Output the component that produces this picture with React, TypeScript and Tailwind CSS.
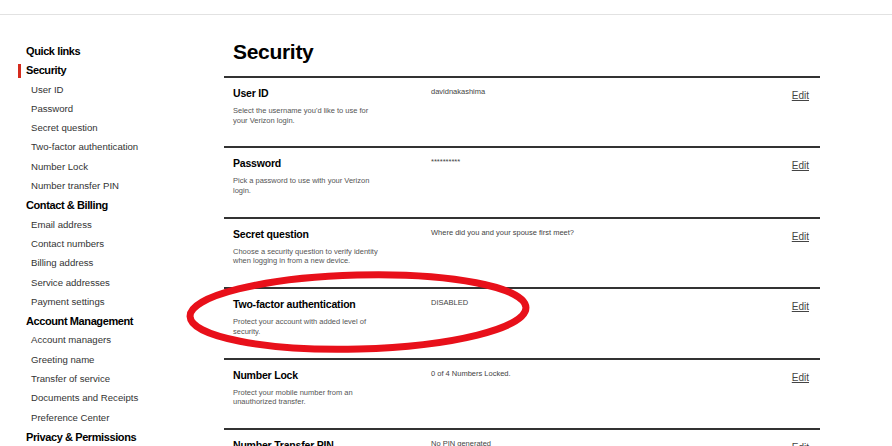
import React from 'react';

type NavEntry = { label: string; kind: 'head' | 'item' | 'active' };

const nav: NavEntry[] = [
  { label: 'Quick links', kind: 'head' },
  { label: 'Security', kind: 'active' },
  { label: 'User ID', kind: 'item' },
  { label: 'Password', kind: 'item' },
  { label: 'Secret question', kind: 'item' },
  { label: 'Two-factor authentication', kind: 'item' },
  { label: 'Number Lock', kind: 'item' },
  { label: 'Number transfer PIN', kind: 'item' },
  { label: 'Contact & Billing', kind: 'head' },
  { label: 'Email address', kind: 'item' },
  { label: 'Contact numbers', kind: 'item' },
  { label: 'Billing address', kind: 'item' },
  { label: 'Service addresses', kind: 'item' },
  { label: 'Payment settings', kind: 'item' },
  { label: 'Account Management', kind: 'head' },
  { label: 'Account managers', kind: 'item' },
  { label: 'Greeting name', kind: 'item' },
  { label: 'Transfer of service', kind: 'item' },
  { label: 'Documents and Receipts', kind: 'item' },
  { label: 'Preference Center', kind: 'item' },
  { label: 'Privacy & Permissions', kind: 'head' },
];

const rows = [
  { title: 'User ID', desc: "Select the username you'd like to use for your Verizon login.", value: 'davidnakashima' },
  { title: 'Password', desc: 'Pick a password to use with your Verizon login.', value: '**********' },
  { title: 'Secret question', desc: 'Choose a security question to verify identity when logging in from a new device.', value: 'Where did you and your spouse first meet?' },
  { title: 'Two-factor authentication', desc: 'Protect your account with added level of security.', value: 'DISABLED' },
  { title: 'Number Lock', desc: 'Protect your mobile number from an unauthorized transfer.', value: '0 of 4 Numbers Locked.' },
  { title: 'Number Transfer PIN', desc: 'Protect your number with a transfer PIN.', value: 'No PIN generated' },
];

export default function App() {
  return (
    <div
      className="relative h-[446px] w-[892px] overflow-hidden bg-white text-black"
      style={{ fontFamily: '"Liberation Sans", Arial, sans-serif' }}
    >
      {/* Top header strip */}
      <div className="h-[15px] border-b border-[#e2e2e2]" />

      <div className="flex">
        {/* Sidebar */}
        <nav className="w-[224px] shrink-0 pt-[26.5px]">
          {nav.map((n) => (
            <div key={n.label} className="relative flex h-[19.3px] items-center">
              {n.kind === 'active' && (
                <span className="absolute left-[18px] top-[3px] h-[14px] w-[3px] bg-[#d52b1e]" />
              )}
              {n.kind === 'item' ? (
                <span className="pl-[31px] text-[9.6px] text-[#333]">{n.label}</span>
              ) : (
                <span className="pl-[26px] text-[11px] font-bold tracking-[-0.4px] text-black">{n.label}</span>
              )}
            </div>
          ))}
        </nav>

        {/* Main */}
        <main className="w-[596px] shrink-0 pt-[25px]">
          <h1 className="mb-[12px] pl-[9px] text-[21px] font-bold leading-[24px] tracking-[-0.3px]">Security</h1>
          {rows.map((r) => (
            <div key={r.title} className="flex h-[70.4px] border-t-2 border-[#333]">
              <div className="w-[207px] shrink-0 pl-[9px] pt-[8px]">
                <div className="text-[10.5px] font-bold leading-[14px] tracking-[-0.2px]">{r.title}</div>
                <p className="mt-[6px] w-[150px] text-[7.5px] leading-[9.5px] text-[#555]">{r.desc}</p>
              </div>
              <div className="flex-1 pt-[7px] text-[7.5px] leading-[14px] text-[#444]">{r.value}</div>
              <div className="pr-[11px] pt-[11px] text-[10px] leading-[14px] text-[#444] underline">Edit</div>
            </div>
          ))}
        </main>
      </div>

      {/* Red marker ellipse drawn over the page */}
      <svg className="pointer-events-none absolute inset-0" width="892" height="446" viewBox="0 0 892 446">
        <ellipse
          cx="358"
          cy="312"
          rx="168"
          ry="37"
          fill="none"
          stroke="#e8101a"
          strokeWidth="7"
          transform="rotate(-1.5 358 312)"
        />
      </svg>
    </div>
  );
}
